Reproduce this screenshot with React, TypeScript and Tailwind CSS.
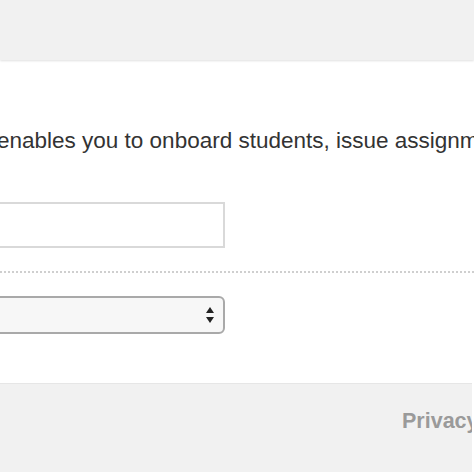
export default function App() {
  return (
    <div className="flex h-[474px] w-[474px] flex-col overflow-hidden bg-white font-['Liberation_Sans',Arial,sans-serif]">
      <header className="h-[60px] shrink-0 bg-[#f1f1f1] shadow-[0_1px_2px_rgba(0,0,0,0.12)]" />

      <main className="h-[323px] shrink-0 pt-[68px]">
        <p className="ml-[-3px] whitespace-nowrap text-[22.5px] leading-[26px] text-[#333]">
          enables you to onboard students, issue assignm
        </p>

        <div className="mt-[48px] ml-[-40px] h-[46px] w-[265px] border-2 border-[#d9d9d9] bg-white" />

        <div className="mt-[23px] border-t-2 border-dotted border-[#cfcfcf]" />

        <div className="mt-[23px] ml-[-40px] flex h-[38px] w-[265px] items-center justify-end rounded-[6px] border-2 border-[#a9a9a9] bg-[#f7f7f7] pr-[8px]">
          <svg width="10" height="20" viewBox="0 0 10 20" aria-hidden>
            <path d="M5 2 L9 8 L1 8 Z" fill="#222" />
            <path d="M1 12 L9 12 L5 18 Z" fill="#222" />
          </svg>
        </div>
      </main>

      <footer className="h-[89px] w-[472px] shrink-0 overflow-hidden border-t border-[#e6e6e6] bg-[#f1f1f1] pl-[402px] pt-[21px]">
        <span className="whitespace-nowrap text-[21.5px] font-bold text-[#9a9a9a]">Privacy</span>
      </footer>
    </div>
  );
}
